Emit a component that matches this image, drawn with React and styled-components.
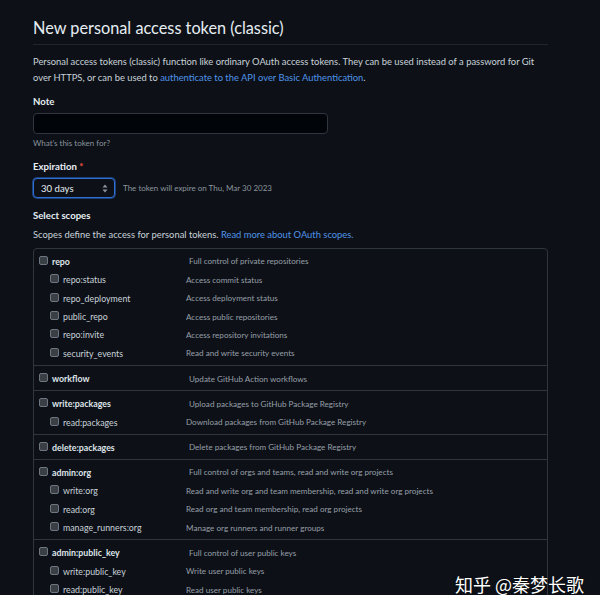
import React from "react";
import styled, { createGlobalStyle } from "styled-components";

const Global = createGlobalStyle`
  html, body { margin: 0; padding: 0; background: #0d1117; }
  body { font-family: Lato, "Noto Sans", sans-serif; color: #c9d1d9; overflow: hidden; }
`;

const Page = styled.div`
  position: relative;
  width: 515px;
  padding: 0 33px;
  min-height: 595px;
`;

const Heading = styled.h1`
  margin: 16px 0 0;
  padding-bottom: 4px;
  font-size: 16.3px;
  line-height: 24px;
  font-weight: 400;
  color: #e6edf3;
  border-bottom: 1px solid #21262d;
`;

const Para = styled.p`
  margin: ${(p) => p.$mt || 0}px 0 0;
  font-size: 9.4px;
  line-height: 16px;
  color: #c9d1d9;
`;

const Link = styled.a`
  color: #4f93e8;
  text-decoration: none;
`;

const Label = styled.div`
  margin-top: ${(p) => p.$mt}px;
  font-size: 9.6px;
  line-height: 14px;
  font-weight: 700;
  color: #e6edf3;
`;

const Req = styled.span`
  color: #f85149;
`;

const Input = styled.div`
  margin-top: 4px;
  width: 295px;
  height: 21px;
  box-sizing: border-box;
  background: #010409;
  border: 1px solid #30363d;
  border-radius: 4px;
`;

const Hint = styled.div`
  margin-top: 3px;
  font-size: 8px;
  line-height: 12px;
  color: #8b949e;
`;

const SelectRow = styled.div`
  margin-top: 4px;
  display: flex;
  align-items: center;
  gap: 8px;
`;

const Note = styled.span`
  font-size: 8px;
  line-height: 12px;
  color: #8b949e;
`;

const Select = styled.div`
  width: 82px;
  height: 20px;
  box-sizing: border-box;
  border: 1px solid #2f6fd6;
  box-shadow: 0 0 0 1px #1c3f78;
  border-radius: 4px;
  background: #0d1117;
  display: flex;
  align-items: center;
  justify-content: space-between;
  padding: 0 6px 0 7px;
  font-size: 9.6px;
  color: #e6edf3;
`;

const Table = styled.div`
  margin-top: 5px;
  border: 1px solid #30363d;
  border-radius: 4px;
`;

const Group = styled.div`
  padding: 3.2px 0 2.6px;
  & + & { border-top: 1px solid #30363d; }
`;

const Row = styled.div`
  height: 18.4px;
  display: flex;
  align-items: center;
  padding-left: ${(p) => (p.$sub ? 16 : 5)}px;
`;

const Box = styled.span`
  width: 9px;
  height: 9px;
  box-sizing: border-box;
  flex: none;
  margin-right: 4px;
  margin-top: -2px;
  background: #3a3f46;
  border: 1px solid #6e7681;
  border-radius: 2px;
`;

const Name = styled.span`
  width: ${(p) => (p.$sub ? 123 : 137)}px;
  flex: none;
  font-size: 8.8px;
  font-weight: ${(p) => (p.$sub ? 400 : 700)};
  color: ${(p) => (p.$sub ? "#c9d1d9" : "#dfe5ea")};
`;

const Desc = styled.span`
  font-size: 8.1px;
  color: #979fa8;
  white-space: nowrap;
`;

const Watermark = styled.div`
  position: absolute;
  left: 455px;
  top: 556px;
  font-family: "Noto Sans CJK SC", sans-serif;
  font-size: 18px;
  line-height: 24px;
  color: #ffffff;
  text-shadow: 0 0 2px rgba(0,0,0,0.6);
  white-space: nowrap;
`;

const groups = [
  [["repo", "Full control of private repositories"],
   ["repo:status", "Access commit status"],
   ["repo_deployment", "Access deployment status"],
   ["public_repo", "Access public repositories"],
   ["repo:invite", "Access repository invitations"],
   ["security_events", "Read and write security events"]],
  [["workflow", "Update GitHub Action workflows"]],
  [["write:packages", "Upload packages to GitHub Package Registry"],
   ["read:packages", "Download packages from GitHub Package Registry"]],
  [["delete:packages", "Delete packages from GitHub Package Registry"]],
  [["admin:org", "Full control of orgs and teams, read and write org projects"],
   ["write:org", "Read and write org and team membership, read and write org projects"],
   ["read:org", "Read org and team membership, read org projects"],
   ["manage_runners:org", "Manage org runners and runner groups"]],
  [["admin:public_key", "Full control of user public keys"],
   ["write:public_key", "Write user public keys"],
   ["read:public_key", "Read user public keys"]],
];

const Arrows = () => (
  <svg width="6" height="9" viewBox="0 0 6 9">
    <path d="M3 0.5 L5.5 3.5 L0.5 3.5 Z M3 8.5 L5.5 5.5 L0.5 5.5 Z" fill="#8b949e" />
  </svg>
);

export default function App() {
  return (
    <Page>
      <Global />
      <Heading>New personal access token (classic)</Heading>
      <Para $mt={9}>
        Personal access tokens (classic) function like ordinary OAuth access tokens. They can be used instead of a password for Git over HTTPS, or can be used to{" "}
        <Link>authenticate to the API over Basic Authentication</Link>.
      </Para>
      <Label $mt={9}>Note</Label>
      <Input />
      <Hint>What’s this token for?</Hint>
      <Label $mt={11}>Expiration <Req>*</Req></Label>
      <SelectRow>
        <Select>
          <span>30 days</span>
          <Arrows />
        </Select>
        <Note>The token will expire on Thu, Mar 30 2023</Note>
      </SelectRow>
      <Label $mt={11}>Select scopes</Label>
      <Para $mt={4}>
        Scopes define the access for personal tokens. <Link>Read more about OAuth scopes.</Link>
      </Para>
      <Table>
        {groups.map((g, gi) => (
          <Group key={gi}>
            {g.map(([name, desc], i) => (
              <Row key={name} $sub={i > 0}>
                <Box />
                <Name $sub={i > 0}>{name}</Name>
                <Desc>{desc}</Desc>
              </Row>
            ))}
          </Group>
        ))}
      </Table>
      <Watermark>知乎 @秦梦长歌</Watermark>
    </Page>
  );
}
